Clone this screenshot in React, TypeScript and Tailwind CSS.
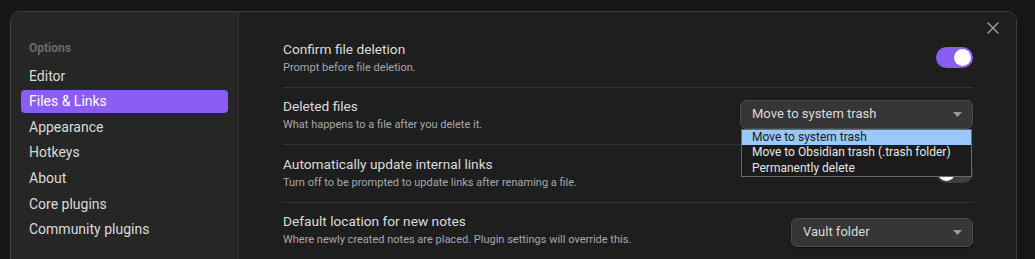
import React from 'react';

// ---------------------------------------------------------------------------
// Data
// ---------------------------------------------------------------------------

const navItems = [
  'Editor',
  'Files & Links',
  'Appearance',
  'Hotkeys',
  'About',
  'Core plugins',
  'Community plugins',
];

const trashOptions = [
  'Move to system trash',
  'Move to Obsidian trash (.trash folder)',
  'Permanently delete',
];

// ---------------------------------------------------------------------------
// Small controls
// ---------------------------------------------------------------------------

function Toggle({ on }: { on: boolean }) {
  return (
    <div
      className={
        on
          ? 'flex h-[21px] w-[37px] items-center justify-end rounded-full bg-[#8b5cf6] px-[2px]'
          : 'flex h-[21px] w-[37px] items-center justify-start rounded-full bg-[#3f3f3f] px-[2px]'
      }
    >
      <div className="h-[17px] w-[17px] rounded-full bg-white" />
    </div>
  );
}

function Caret() {
  return (
    <svg width="9" height="5" viewBox="0 0 9 5" className="shrink-0">
      <path d="M0 0h9L4.5 5z" fill="#9a9a9a" />
    </svg>
  );
}

function Dropdown({ value, width }: { value: string; width: string }) {
  return (
    <div
      className={`flex h-[29px] items-center justify-between rounded-[6px] border border-[#4a4a4a] bg-[#363636] pl-[11px] pr-[10px] text-[13px] text-[#dadada] shadow-[0_1px_2px_rgba(0,0,0,0.5)] ${width}`}
    >
      <span>{value}</span>
      <Caret />
    </div>
  );
}

function SettingRow({
  title,
  desc,
  first,
  children,
}: {
  title: string;
  desc: string;
  first?: boolean;
  children: React.ReactNode;
}) {
  return (
    <div
      className={
        first
          ? 'relative flex items-center justify-between pb-[11px] pt-[8.5px]'
          : 'relative flex items-center justify-between border-t border-[#333333] pb-[11px] pt-[8.5px]'
      }
    >
      <div className="flex flex-col gap-[1px]">
        <div className="text-[13.7px] leading-[20px] text-[#dcdcdc]">{title}</div>
        <div className="text-[11px] leading-[16px] text-[#a8a8a8]">{desc}</div>
      </div>
      {children}
    </div>
  );
}

// ---------------------------------------------------------------------------
// App
// ---------------------------------------------------------------------------

export default function App() {
  return (
    <div
      className="h-[259px] w-full overflow-hidden bg-[#161616] pl-[10px] pt-[11px]"
      style={{ fontFamily: 'Roboto, "Noto Sans", sans-serif' }}
    >
      <div className="relative flex h-[260px] w-[1007px] overflow-hidden rounded-t-[10px] border border-b-0 border-[#3e3e3e]">
        {/* Sidebar */}
        <div className="w-[228px] shrink-0 border-r border-[#353535] bg-[#262626] pl-[10px] pr-[10px] pt-[28px]">
          <div className="mb-[8.5px] px-[8px] text-[12px] font-bold leading-[16px] text-[#6a6a6a]">
            Options
          </div>
          <div className="flex flex-col gap-[2.67px]">
            {navItems.map((item) => (
              <div
                key={item}
                className={
                  item === 'Files & Links'
                    ? 'flex h-[23px] items-center rounded-[4px] bg-[#8b5cf6] px-[8px] text-[14px] text-white'
                    : 'flex h-[23px] items-center rounded-[4px] px-[8px] text-[14px] text-[#dadada]'
                }
              >
                {item}
              </div>
            ))}
          </div>
        </div>

        {/* Content */}
        <div className="flex-1 bg-[#1e1e1e] pl-[44px] pr-[43px] pt-[18px]">
          <SettingRow title="Confirm file deletion" desc="Prompt before file deletion." first>
            <Toggle on />
          </SettingRow>

          <SettingRow title="Deleted files" desc="What happens to a file after you delete it.">
            <div className="relative -mt-[1px]">
              <Dropdown value="Move to system trash" width="w-[233px]" />
              {/* open native list */}
              <div className="absolute left-[1px] top-[29px] z-10 w-[231px] whitespace-nowrap border border-[#6a6a6a] bg-[#1b1b1b] text-[12px] leading-[15.5px] text-[#e6e6e6]">
                {trashOptions.map((opt, i) => (
                  <div
                    key={opt}
                    className={
                      i === 0
                        ? 'bg-[#99c8ff] px-[10px] text-[#1b1b1b]'
                        : 'px-[10px]'
                    }
                  >
                    {opt}
                  </div>
                ))}
              </div>
            </div>
          </SettingRow>

          <SettingRow
            title="Automatically update internal links"
            desc="Turn off to be prompted to update links after renaming a file."
          >
            <Toggle on={false} />
          </SettingRow>

          <SettingRow
            title="Default location for new notes"
            desc="Where newly created notes are placed. Plugin settings will override this."
          >
            <div className="mt-[5px]">
              <Dropdown value="Vault folder" width="w-[182px]" />
            </div>
          </SettingRow>
        </div>

        {/* Close */}
        <div className="absolute right-[17px] top-[10px] text-[#a0a0a0]">
          <svg width="12" height="12" viewBox="0 0 12 12">
            <path d="M1 1l10 10M11 1L1 11" stroke="currentColor" strokeWidth="1.4" strokeLinecap="round" />
          </svg>
        </div>
      </div>
    </div>
  );
}
